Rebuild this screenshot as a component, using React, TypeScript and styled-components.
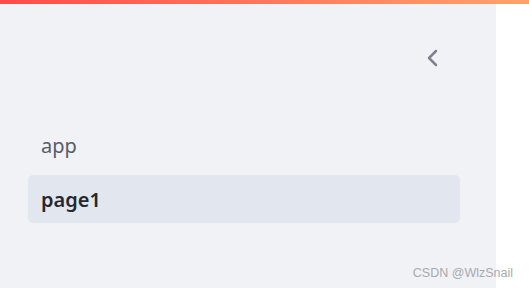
import React from "react";
import styled, { createGlobalStyle } from "styled-components";

const GlobalStyle = createGlobalStyle`
  html, body {
    margin: 0;
    padding: 0;
    background: #ffffff;
  }
  body {
    font-family: "Noto Sans", "Open Sans", "Liberation Sans", sans-serif;
  }
`;

const Page = styled.div`
  position: relative;
  width: 529px;
  height: 288px;
  overflow: hidden;
  display: flex;
  flex-direction: column;
`;

const Decoration = styled.div`
  height: 4px;
  flex: none;
  background: linear-gradient(90deg, #ff4b4b 0%, #ffa36b 100%);
`;

const Body = styled.div`
  flex: 1;
  display: flex;
`;

const Sidebar = styled.aside`
  width: 496px;
  background: #f0f2f6;
  padding: 0 36px 0 28px;
  box-sizing: border-box;
  display: flex;
  flex-direction: column;
`;

const Header = styled.div`
  display: flex;
  justify-content: flex-end;
  padding-top: 42px;
  padding-right: 16px;
  height: 24px;
`;

const CollapseButton = styled.button`
  border: none;
  background: transparent;
  padding: 0;
  width: 24px;
  height: 24px;
  display: flex;
  align-items: center;
  justify-content: center;
  color: #7f8192;
  cursor: pointer;
`;

const NavList = styled.nav`
  margin-top: 51px;
  display: flex;
  flex-direction: column;
  gap: 6px;
`;

const NavItem = styled.a<{ $active?: boolean }>`
  display: flex;
  align-items: center;
  height: 48px;
  padding-left: 13px;
  border-radius: 5px;
  font-size: 20px;
  text-decoration: none;
  color: ${(p) => (p.$active ? "#262730" : "#5a5c69")};
  font-weight: ${(p) => (p.$active ? 600 : 400)};
  background: ${(p) => (p.$active ? "#e2e6ee" : "transparent")};
`;

const Main = styled.main`
  flex: 1;
  background: #ffffff;
`;

const Watermark = styled.div`
  position: absolute;
  right: 16px;
  bottom: 8px;
  font-family: "Liberation Sans", Arial, sans-serif;
  font-size: 12.5px;
  color: #a8aaaf;
`;

const Chevron = () => (
  <svg width="24" height="24" viewBox="0 0 24 24" fill="none">
    <path
      d="M16 5 L9 12 L16 19"
      stroke="currentColor"
      strokeWidth="2.5"
      strokeLinecap="round"
      strokeLinejoin="round"
    />
  </svg>
);

const App = () => {
  const pages = [
    { name: "app", active: false },
    { name: "page1", active: true },
  ];
  return (
    <>
      <GlobalStyle />
      <Page>
        <Decoration />
        <Body>
          <Sidebar>
            <Header>
              <CollapseButton aria-label="Collapse sidebar">
                <Chevron />
              </CollapseButton>
            </Header>
            <NavList>
              {pages.map((p) => (
                <NavItem key={p.name} href="#" $active={p.active}>
                  {p.name}
                </NavItem>
              ))}
            </NavList>
          </Sidebar>
          <Main />
        </Body>
        <Watermark>CSDN @WlzSnail</Watermark>
      </Page>
    </>
  );
};

export default App;
